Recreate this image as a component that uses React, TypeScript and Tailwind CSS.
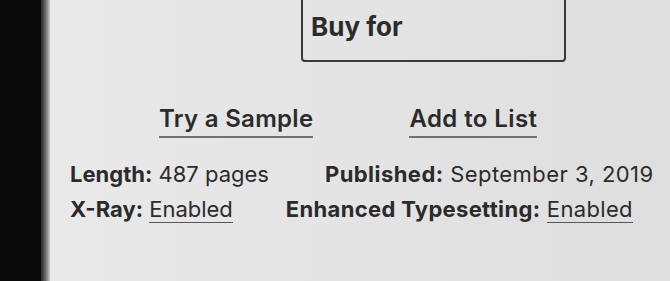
import React from "react";

export default function App() {
  const font = { fontFamily: 'Inter, "Open Sans", sans-serif' };
  return (
    <div className="flex h-[281px] w-[670px] overflow-hidden bg-black" style={font}>
      <div className="w-[41px] shrink-0 bg-[#0a0a0a]" />
      <div className="w-[9px] shrink-0 bg-gradient-to-r from-[#2a2a2a] via-[#6a6a6a] to-[#c8c8c8]" />
      <div className="flex flex-1 flex-col bg-gradient-to-r from-[#e9e9e9] via-[#e4e4e4] to-[#dedede] text-[#2b2b2b]">
        <div className="ml-[251px] mt-[-20px] h-[82px] w-[265px] shrink-0 rounded-b-[4px] border-2 border-[#3a3a3a] pl-[8px] pt-[32px]">
          <span className="text-[26px] font-bold leading-none">Buy for</span>
        </div>
        <div className="mt-[42px] flex pl-[109px]">
          <span className="border-b-2 border-[#707070] pb-[2px] text-[24px] font-semibold leading-[30px] tracking-[0.3px]">Try a Sample</span>
          <span className="ml-[96px] border-b-2 border-[#707070] pb-[2px] text-[24px] font-semibold leading-[30px] tracking-[0.4px]">Add to List</span>
        </div>
        <div className="mt-[21px] flex flex-col gap-[5px] pl-[20px] text-[22px] leading-[30px]">
          <div className="flex gap-[56px]">
            <span><b className="font-bold">Length:</b> 487 pages</span>
            <span className="tracking-[0.45px]"><b className="font-bold">Published:</b> September 3, 2019</span>
          </div>
          <div className="flex gap-[53px]">
            <span><b className="font-bold">X-Ray:</b> <span className="border-b border-[#555]">Enabled</span></span>
            <span className="tracking-[0.33px]"><b className="font-bold">Enhanced Typesetting:</b> <span className="border-b border-[#555]">Enabled</span></span>
          </div>
        </div>
      </div>
    </div>
  );
}
